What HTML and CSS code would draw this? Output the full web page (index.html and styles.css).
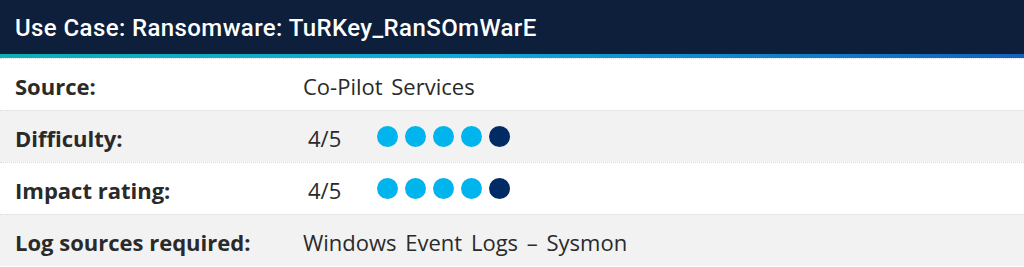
FILE: index.html
```html
<!DOCTYPE html>
<html lang="en">
<head>
<meta charset="utf-8">
<title>Use Case</title>
<link rel="stylesheet" href="styles.css">
</head>
<body>
<div class="card">
  <div class="header">
    <h1 class="title">Use Case: Ransomware: TuRKey_RanSOmWarE</h1>
  </div>
  <div class="stripe"></div>
  <div class="row">
    <div class="label">Source:</div>
    <div class="value">Co-Pilot Services</div>
  </div>
  <div class="row alt">
    <div class="label">Difficulty:</div>
    <div class="value rating">
      <span class="score">4/5</span>
      <span class="dots"><i class="dot on"></i><i class="dot on"></i><i class="dot on"></i><i class="dot on"></i><i class="dot off"></i></span>
    </div>
  </div>
  <div class="row">
    <div class="label">Impact rating:</div>
    <div class="value rating">
      <span class="score">4/5</span>
      <span class="dots"><i class="dot on"></i><i class="dot on"></i><i class="dot on"></i><i class="dot on"></i><i class="dot off"></i></span>
    </div>
  </div>
  <div class="row alt">
    <div class="label">Log sources required:</div>
    <div class="value">Windows Event Logs – Sysmon</div>
  </div>
</div>
</body>
</html>
```

FILE: styles.css
```css
* { box-sizing: border-box; }
html, body { margin: 0; padding: 0; background: #ffffff; }
.card { width: 1024px; }
.header {
  background: #0d1f3a;
  height: 54px;
  display: flex;
  align-items: center;
  padding: 0 15px;
}
.title {
  margin: 0;
  color: #ffffff;
  font-family: Roboto, "Liberation Sans", sans-serif;
  font-weight: 500;
  font-size: 24px;
  letter-spacing: 0.4px;
  padding-top: 2px;
}
.stripe {
  height: 4px;
  background: linear-gradient(90deg, #0db0b6 0%, #12a9d8 45%, #1262c2 100%);
}
.row {
  height: 52px;
  display: flex;
  align-items: center;
  padding: 0 15px;
  font-family: "Open Sans", "Noto Sans", sans-serif;
  font-size: 22px;
  color: #2a2a2a;
  border-top: 1px dotted #dcdcdc;
}
.row:first-of-type { border-top: none; }
.row.alt { background: #f2f2f2; }
.label {
  width: 288px;
  font-weight: 700;
  padding-top: 3px;
}
.value { padding-top: 3px; word-spacing: 3px; }
.rating { display: flex; align-items: center; padding-left: 5px; }
.score { width: 69px; }
.dots { display: flex; gap: 7px; padding-bottom: 3px; }
.dot {
  display: block;
  width: 21px;
  height: 21px;
  border-radius: 50%;
}
.dot.on { background: #00b4ee; }
.dot.off { background: #002b64; }
```
